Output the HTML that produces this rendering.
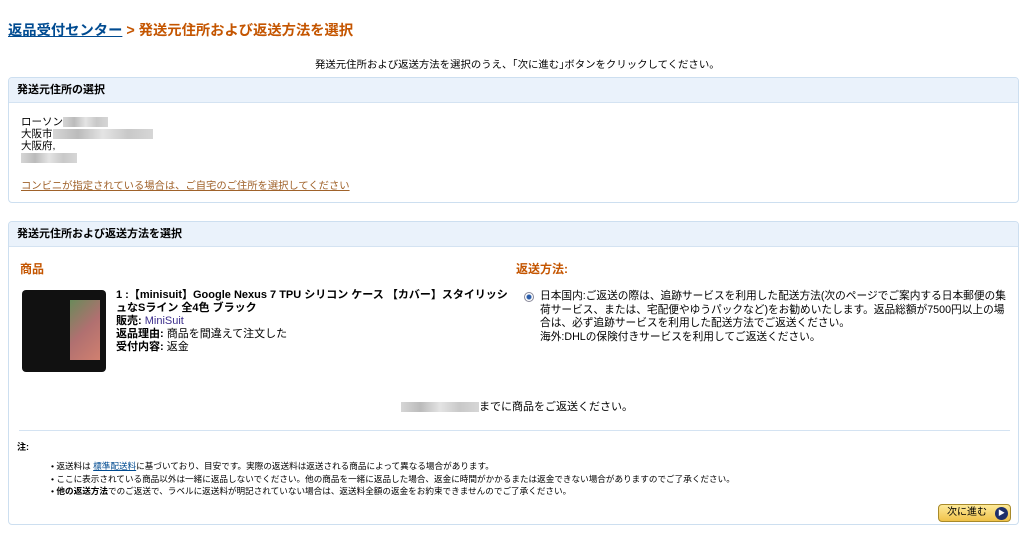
<!DOCTYPE html>
<html><head><meta charset="utf-8"><style>
*{margin:0;padding:0;box-sizing:border-box}
body{width:1024px;height:537px;background:#fff;font-family:"Liberation Sans","Noto Sans CJK JP",sans-serif;font-size:11px;color:#000;position:relative;overflow:hidden}
.a{position:absolute;white-space:nowrap}
.box{position:absolute;left:8px;width:1011px;border:1px solid #cddff0;border-radius:4px;overflow:hidden}
.hd{background:#eaf2fb;border-bottom:1px solid #d4e3f2;height:25px;line-height:24px;padding-left:8px;font-weight:bold;font-size:11px}
.blur{display:inline-block;height:10px;background:linear-gradient(90deg,#ccc,#aaa,#ddd,#bbb,#ccc);vertical-align:middle;opacity:.8}
.or{color:#c45500;font-weight:bold}
</style></head><body>
<div class="a" style="left:8px;top:19px;font-size:14.3px;font-weight:bold"><span style="color:#004b91;text-decoration:underline">返品受付センター</span> <span style="color:#c45500">&gt; 発送元住所および返送方法を選択</span></div>
<div class="a" style="left:315px;top:56px;font-size:10.4px">発送元住所および返送方法を選択のうえ、｢次に進む｣ボタンをクリックしてください。</div>
<div class="box" style="top:77px;height:126px">
<div class="hd">発送元住所の選択</div>
<div class="a" style="left:12px;top:38px;line-height:12px;font-size:10.5px">ローソン<span class="blur" style="width:45px"></span><br>大阪市<span class="blur" style="width:100px"></span><br>大阪府,<br><span class="blur" style="width:56px"></span></div>
<div class="a" style="left:12px;top:99px;color:#a0622a;text-decoration:underline;font-size:10.3px">コンビニが指定されている場合は、ご自宅のご住所を選択してください</div>
</div>
<div class="box" style="top:221px;height:304px">
<div class="hd">発送元住所および返送方法を選択</div>
<div class="a or" style="left:11px;top:38px;font-size:12px">商品</div>
<div class="a" style="left:13px;top:68px;width:84px;height:82px;background:#111;border-radius:4px"><div style="position:absolute;left:48px;top:10px;width:30px;height:60px;background:linear-gradient(135deg,#6a8a5a,#b07070,#d08070)"></div></div>
<div class="a" style="left:107px;top:67px;line-height:13px;font-size:11px;white-space:normal;width:395px"><b>1 :【minisuit】Google Nexus 7 TPU シリコン ケース 【カバー】スタイリッシュなSライン 全4色 ブラック</b><br><b>販売:</b> <span style="color:#3b2d8c">MiniSuit</span><br><b>返品理由:</b> 商品を間違えて注文した<br><b>受付内容:</b> 返金</div>
<div class="a or" style="left:507px;top:38px;font-size:12px">返送方法:</div>
<div class="a" style="left:515px;top:70px;width:10px;height:10px;border:1px solid #889;border-radius:50%;background:radial-gradient(circle,#2a5ca8 2px,#fff 3px)"></div>
<div class="a" style="left:531px;top:68px;line-height:13.5px;white-space:normal;width:470px;font-size:10.7px">日本国内:ご返送の際は、追跡サービスを利用した配送方法(次のページでご案内する日本郵便の集荷サービス、または、宅配便やゆうパックなど)をお勧めいたします。返品総額が7500円以上の場合は、必ず追跡サービスを利用した配送方法でご返送ください。<br>海外:DHLの保険付きサービスを利用してご返送ください。</div>
<div class="a" style="left:392px;top:176px"><span class="blur" style="width:78px"></span>までに商品をご返送ください。</div>
<div class="a" style="left:10px;top:208px;width:991px;height:1px;background:#d4e3f2"></div>
<div class="a" style="left:8px;top:218px;font-size:9px;font-weight:bold">注:</div>
<div class="a" style="left:42px;top:238px;font-size:8.6px;line-height:12.5px">• 返送料は <span style="color:#004b91;text-decoration:underline">標準配送料</span>に基づいており、目安です。実際の返送料は返送される商品によって異なる場合があります。<br>• ここに表示されている商品以外は一緒に返品しないでください。他の商品を一緒に返品した場合、返金に時間がかかるまたは返金できない場合がありますのでご了承ください。<br>• <b>他の返送方法</b>でのご返送で、ラベルに返送料が明記されていない場合は、返送料全額の返金をお約束できませんのでご了承ください。</div>
<div class="a" style="left:929px;top:282px;width:73px;height:18px;border:1px solid #a88a2a;border-radius:4px;background:linear-gradient(#fde99a,#f0c24a);font-size:10px;line-height:16px;padding-left:8px">次に進む<span style="position:absolute;right:2px;top:2px;width:13px;height:13px;border-radius:50%;background:#1f2f6a;color:#fff;font-size:7px;line-height:13px;text-align:center">▶</span></div>
</div>
</body></html>
